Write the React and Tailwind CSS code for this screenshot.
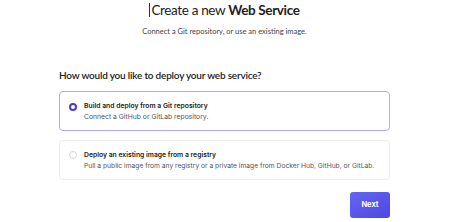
export default function App() {
  return (
    <div className="w-[474px] h-[222px] bg-white overflow-hidden" style={{ fontFamily: "Lato, 'Noto Sans', sans-serif" }}>
      <div className="ml-[59px] w-[331px]">
        <div className="pt-[1px] text-center">
          <h1 className="text-[13.5px] leading-[19px] tracking-[-0.35px] text-[#222]">
            <span className="inline-block w-px h-[14px] bg-[#333] align-[-2px] mr-[1px]"></span>
            Create a new <span className="font-bold">Web Service</span>
          </h1>
          <p className="mt-[7px] text-[7.5px] leading-[10px] text-[#444]">
            Connect a Git repository, or use an existing image.
          </p>
        </div>

        <h2 className="mt-[31px] text-[10px] leading-[14px] tracking-[-0.2px] font-semibold text-[#222]">
          How would you like to deploy your web service?
        </h2>

        <div className="mt-[9px] flex flex-col gap-[9px]" style={{ fontFamily: "Inter, 'Noto Sans', sans-serif" }}>
          <div className="h-[40px] rounded-[4px] border border-[#b4a8ee] flex items-start px-[9px] pt-[9px] gap-[7px]">
            <span className="mt-[2px] w-[8px] h-[8px] rounded-full border-[2px] border-[#4b3fc9] shrink-0"></span>
            <div>
              <div className="text-[6.8px] leading-[10px] font-semibold text-[#222]">Build and deploy from a Git repository</div>
              <div className="mt-[1px] text-[6.8px] leading-[10px] text-[#555]">Connect a GitHub or GitLab repository.</div>
            </div>
          </div>
          <div className="h-[40px] rounded-[4px] border border-[#ececef] flex items-start px-[9px] pt-[9px] gap-[7px]">
            <span className="mt-[1px] w-[8px] h-[8px] rounded-full border border-[#d6d6dc] shrink-0"></span>
            <div>
              <div className="text-[6.8px] leading-[10px] font-semibold text-[#222]">Deploy an existing image from a registry</div>
              <div className="mt-[1px] text-[6.7px] leading-[10px] text-[#555] whitespace-nowrap">Pull a public image from any registry or a private image from Docker Hub, GitHub, or GitLab.</div>
            </div>
          </div>
        </div>

        <div className="mt-[12px] flex justify-end">
          <button className="w-[40px] h-[26px] rounded-[3px] bg-gradient-to-br from-[#6366f1] to-[#4f46e5] text-white text-[7.5px] font-bold" style={{ fontFamily: "Inter, sans-serif" }}>
            Next
          </button>
        </div>
      </div>
    </div>
  );
}
